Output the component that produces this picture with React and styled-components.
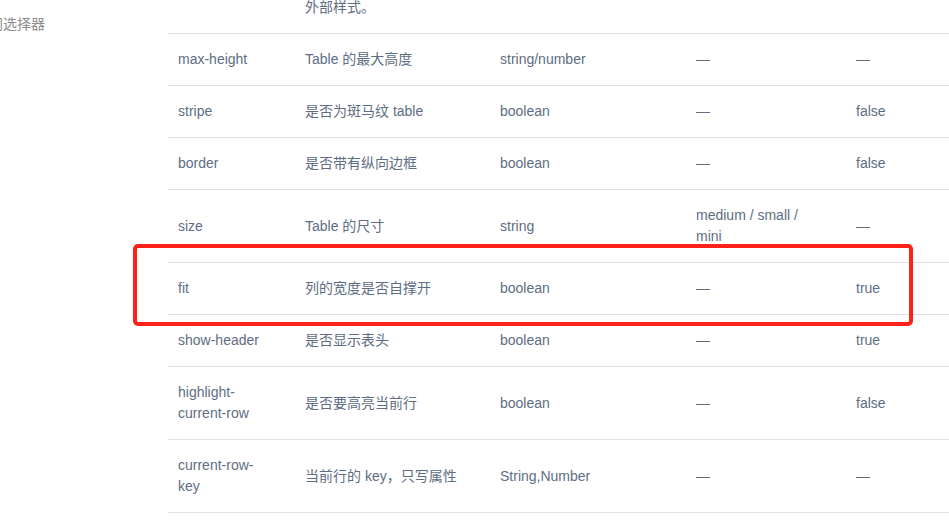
import React from "react";
import styled, { createGlobalStyle } from "styled-components";

const GlobalStyle = createGlobalStyle`
  html, body {
    margin: 0;
    padding: 0;
    background: #fff;
    overflow: hidden;
  }
  body {
    font-family: "Liberation Sans", "Noto Sans CJK SC", sans-serif;
    font-size: 14px;
    color: #5e6d82;
  }
`;

const Page = styled.div`
  position: relative;
  display: flex;
  width: 949px;
  height: 521px;
  overflow: hidden;
`;

const Nav = styled.div`
  width: 168px;
  flex: none;
  overflow: hidden;
  display: flex;
  flex-direction: column;
  padding-top: 14px;
`;

const NavItem = styled.div`
  white-space: nowrap;
  line-height: 20px;
  font-size: 14px;
  color: #8c8c8c;
  margin-left: ${(p) => p.$shift}px;
  margin-top: ${(p) => p.$top || 0}px;
`;

const Table = styled.div`
  flex: none;
  width: 800px;
  margin-top: -3px;
  display: flex;
  flex-direction: column;
`;

const Row = styled.div`
  display: grid;
  grid-template-columns: 127px 195px 196px 160px 1fr;
  border-bottom: 1px solid #dfe0e6;
`;

const Cell = styled.div`
  padding: ${(p) => (p.$tail ? "0 10px 15px" : "15px 10px")};
  padding-right: ${(p) => p.$right || 10}px;
  line-height: 21px;
  display: flex;
  align-items: center;
`;

const Box = styled.div`
  position: absolute;
  left: 133px;
  top: 244px;
  width: 772px;
  height: 74px;
  border: 4px solid #fc2218;
  border-radius: 5px;
  pointer-events: none;
`;

const rows = [
  ["max-height", "Table 的最大高度", "string/number", "—", "—"],
  ["stripe", "是否为斑马纹 table", "boolean", "—", "false"],
  ["border", "是否带有纵向边框", "boolean", "—", "false"],
  ["size", "Table 的尺寸", "string", "medium / small / mini", "—"],
  ["fit", "列的宽度是否自撑开", "boolean", "—", "true"],
  ["show-header", "是否显示表头", "boolean", "—", "true"],
  ["highlight-current-row", "是否要高亮当前行", "boolean", "—", "false"],
  ["current-row-key", "当前行的 key，只写属性", "String,Number", "—", "—"],
];

export default function App() {
  return (
    <>
      <GlobalStyle />
      <Page>
        <Nav>
          <NavItem $shift={-53}>日期时间选择器</NavItem>
          <NavItem $shift={-40} $top={223}>上传：</NavItem>
        </Nav>
        <Table>
          <Row>
            <Cell $tail />
            <Cell $tail>外部样式。</Cell>
            <Cell $tail />
            <Cell $tail />
            <Cell $tail />
          </Row>
          {rows.map((r) => (
            <Row key={r[0]}>
              <Cell $right={27}>{r[0]}</Cell>
              <Cell>{r[1]}</Cell>
              <Cell>{r[2]}</Cell>
              <Cell $right={30}>{r[3]}</Cell>
              <Cell>{r[4]}</Cell>
            </Row>
          ))}
        </Table>
        <Box />
      </Page>
    </>
  );
}
